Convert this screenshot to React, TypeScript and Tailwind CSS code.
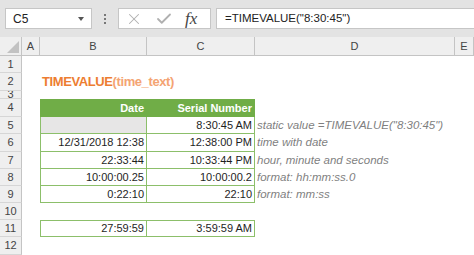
import { X, Check } from "lucide-react"

const font = { fontFamily: '"Liberation Sans", Arial, sans-serif' }

type Row = {
  n: number
  h: string
  b?: string
  c?: string
  d?: string
  kind?: "head" | "body" | "title"
  gray?: boolean
  first?: boolean
}

const rows: Row[] = [
  { n: 1, h: "h-[17px]" },
  { n: 2, h: "h-[18px]", kind: "title" },
  { n: 3, h: "h-[8px]" },
  { n: 4, h: "h-[18px]", kind: "head", b: "Date", c: "Serial Number" },
  { n: 5, h: "h-[17px]", kind: "body", b: "", c: "8:30:45 AM", d: 'static value =TIMEVALUE("8:30:45")', gray: true },
  { n: 6, h: "h-[18px]", kind: "body", b: "12/31/2018 12:38", c: "12:38:00 PM", d: "time with date" },
  { n: 7, h: "h-[17px]", kind: "body", b: "22:33:44", c: "10:33:44 PM", d: "hour, minute and seconds" },
  { n: 8, h: "h-[17px]", kind: "body", b: "10:00:00.25", c: "10:00:00.2", d: "format: hh:mm:ss.0" },
  { n: 9, h: "h-[17px]", kind: "body", b: "0:22:10", c: "22:10", d: "format: mm:ss" },
  { n: 10, h: "h-[17px]" },
  { n: 11, h: "h-[17px]", kind: "body", b: "27:59:59", c: "3:59:59 AM", first: true },
  { n: 12, h: "h-[18px]" },
]

function Toolbar() {
  return (
    <div className="flex items-center h-[37px] bg-[#e3e3e3]">
      <div className="ml-[5px] w-[87px] h-[21px] bg-white border border-[#c6c6c6] flex items-center justify-between pl-[7px] pr-[7px]">
        <span className="text-[12px] text-[#222]">C5</span>
        <span className="w-0 h-0 border-l-[3.5px] border-r-[3.5px] border-t-[4px] border-l-transparent border-r-transparent border-t-[#555]" />
      </div>
      <div className="ml-[11px] w-[3px] flex flex-col gap-[2px] items-center">
        <span className="w-[2px] h-[2px] bg-[#777]" />
        <span className="w-[2px] h-[2px] bg-[#777]" />
        <span className="w-[2px] h-[2px] bg-[#777]" />
      </div>
      <div className="ml-[12px] w-[93px] h-[21px] bg-white border border-[#c6c6c6] flex items-center">
        <X className="ml-[6px] w-[18px] h-[18px] text-[#b0b0b0]" strokeWidth={1.4} />
        <Check className="ml-[12px] w-[18px] h-[18px] text-[#b0b0b0]" strokeWidth={2.4} />
        <span
          className="ml-[12px] text-[17px] italic text-[#444] leading-none"
          style={{ fontFamily: '"Liberation Serif", "Times New Roman", serif' }}
        >
          fx
        </span>
      </div>
      <div className="ml-[5px] flex-1 h-[21px] bg-white border border-[#c6c6c6] border-r-0 flex items-center pl-[8px]">
        <span className="text-[11.5px] text-[#222]">=TIMEVALUE("8:30:45")</span>
      </div>
    </div>
  )
}

function HeaderRow() {
  const cols = ["A", "B", "C", "D", "E"]
  return (
    <>
      <div className="h-[19px] bg-[#efefef] border-r border-b border-[#c4c4c4] relative">
        <svg className="absolute right-[2px] bottom-[2px]" width="12" height="12" viewBox="0 0 12 12">
          <polygon points="12,0 12,12 0,12" fill="#c2c2c2" />
        </svg>
      </div>
      {cols.map((c) => (
        <div
          key={c}
          className="h-[19px] bg-[#efefef] border-r border-b border-[#c4c4c4] flex items-center justify-center text-[11px] text-[#444]"
        >
          {c}
        </div>
      ))}
    </>
  )
}

function SheetRow({ r }: { r: Row }) {
  const rowHead = (
    <div
      className={`${r.h} bg-[#efefef] border-r border-b border-[#d6d6d6] border-r-[#c4c4c4] flex items-center justify-center overflow-hidden text-[11px] text-[#444]`}
    >
      {r.n}
    </div>
  )

  if (r.kind === "title") {
    return (
      <>
        {rowHead}
        <div className={r.h} />
        <div className={`${r.h} col-span-4 flex items-center pl-[2px] whitespace-nowrap`}>
          <span className="text-[13px] font-bold text-[#ed7d31] tracking-[-0.4px]">TIMEVALUE</span>
          <span className="text-[13px] font-bold text-[#f4a473] tracking-[-0.4px]">(time_text)</span>
        </div>
      </>
    )
  }

  if (r.kind === "head") {
    return (
      <>
        {rowHead}
        <div className={r.h} />
        <div className={`${r.h} bg-[#70ad47] flex items-center justify-end pr-[3px] text-[11px] font-bold text-white`}>
          {r.b}
        </div>
        <div className={`${r.h} bg-[#70ad47] flex items-center justify-end pr-[3px] text-[11px] font-bold text-white`}>
          {r.c}
        </div>
        <div className={r.h} />
        <div className={r.h} />
      </>
    )
  }

  if (r.kind === "body") {
    const top = r.first ? "border-t" : ""
    return (
      <>
        {rowHead}
        <div className={r.h} />
        <div
          className={`${r.h} ${top} border-l border-r border-b border-[#8cbf6a] ${r.gray ? "bg-[#e7e6e6]" : "bg-white"} flex items-center justify-end pr-[2px] text-[11px] text-[#1e1e1e] whitespace-nowrap`}
        >
          {r.b}
        </div>
        <div
          className={`${r.h} ${top} border-r border-b border-[#8cbf6a] flex items-center justify-end pr-[2px] text-[11px] text-[#1e1e1e] whitespace-nowrap`}
        >
          {r.c}
        </div>
        <div className={`${r.h} flex items-center pl-[2px] text-[11.5px] italic text-[#7f7f7f] whitespace-nowrap`}>
          {r.d}
        </div>
        <div className={r.h} />
      </>
    )
  }

  return (
    <>
      {rowHead}
      <div className={r.h} />
      <div className={r.h} />
      <div className={r.h} />
      <div className={r.h} />
      <div className={r.h} />
    </>
  )
}

export default function App() {
  return (
    <div className="w-[474px] h-[255px] overflow-hidden bg-white" style={font}>
      <Toolbar />
      <div className="grid grid-cols-[22px_18px_107px_108px_200px_1fr]">
        <HeaderRow />
        {rows.map((r) => (
          <SheetRow key={r.n} r={r} />
        ))}
      </div>
    </div>
  )
}
